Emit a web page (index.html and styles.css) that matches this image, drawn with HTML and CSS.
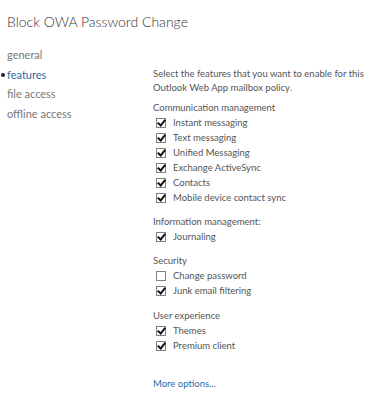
FILE: index.html
```html
<!DOCTYPE html>
<html>
<head>
<meta charset="utf-8">
<link rel="stylesheet" href="styles.css">
</head>
<body>
<h1 class="title">Block OWA Password Change</h1>
<div class="main">
  <ul class="nav">
    <li>general</li>
    <li class="active">features</li>
    <li>file access</li>
    <li>offline access</li>
  </ul>
  <div class="content">
    <p class="intro">Select the features that you want to enable for this Outlook Web App mailbox policy.</p>
    <div class="group">
      <div class="ghead">Communication management</div>
      <div class="item"><span class="cb on"></span>Instant messaging</div>
      <div class="item"><span class="cb on"></span>Text messaging</div>
      <div class="item"><span class="cb on"></span>Unified Messaging</div>
      <div class="item"><span class="cb on"></span>Exchange ActiveSync</div>
      <div class="item"><span class="cb on"></span>Contacts</div>
      <div class="item"><span class="cb on"></span>Mobile device contact sync</div>
    </div>
    <div class="group">
      <div class="ghead">Information management:</div>
      <div class="item"><span class="cb on"></span>Journaling</div>
    </div>
    <div class="group">
      <div class="ghead">Security</div>
      <div class="item"><span class="cb"></span>Change password</div>
      <div class="item"><span class="cb on"></span>Junk email filtering</div>
    </div>
    <div class="group">
      <div class="ghead">User experience</div>
      <div class="item"><span class="cb on"></span>Themes</div>
      <div class="item"><span class="cb on"></span>Premium client</div>
    </div>
    <a class="more">More options...</a>
  </div>
</div>
</body>
</html>
```
FILE: styles.css
```css
* { box-sizing: border-box; }
body {
  margin: 0;
  background: #fff;
  font-family: Lato, "Open Sans", sans-serif;
  color: #555;
}
.title {
  margin: 0;
  padding: 11px 0 0 7px;
  font-size: 14px;
  font-weight: 300;
  color: #333;
  line-height: 22px;
  height: 45px;
}
.main {
  display: flex;
}
.nav {
  list-style: none;
  margin: 0;
  padding: 0 0 0 7px;
  width: 153px;
  font-size: 11px;
  color: #777;
}
.nav li {
  height: 19.7px;
  line-height: 19.7px;
  position: relative;
}
.nav li.active { color: #2a6aa8; }
.nav li.active::before {
  content: "";
  position: absolute;
  left: -6px;
  top: 8px;
  width: 4px;
  height: 4px;
  border-radius: 50%;
  background: #222;
}
.content {
  padding-top: 22px;
  font-size: 9.5px;
  color: #555;
}
.intro {
  margin: 0 0 6px 0;
  line-height: 14px;
  width: 218px;
}
.group { margin-bottom: 10px; }
.ghead { line-height: 14px; }
.item {
  display: flex;
  align-items: center;
  height: 15px;
  padding-left: 3px;
}
.cb {
  width: 10px;
  height: 10px;
  border: 1px solid #808080;
  margin-right: 7px;
  position: relative;
  background: #fff;
}
.cb.on::after {
  content: "";
  position: absolute;
  left: 2px;
  top: -1px;
  width: 3px;
  height: 6px;
  border-right: 2px solid #111;
  border-bottom: 2px solid #111;
  transform: rotate(40deg);
}
.group:nth-of-type(3) { margin-bottom: 11px; }
.more {
  display: block;
  margin-top: 25px;
  color: #2a6aa8;
}
```
